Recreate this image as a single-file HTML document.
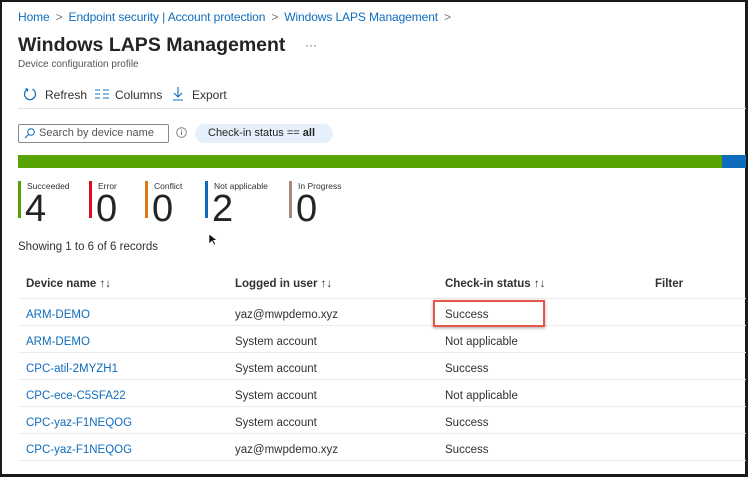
<!DOCTYPE html>
<html><head><style>
*{margin:0;padding:0;box-sizing:border-box}
body{width:750px;height:479px;background:#fff;font-family:"Liberation Sans",sans-serif;color:#323130;position:relative;overflow:hidden}
.frame{position:absolute;left:0;top:0;width:748px;height:477px;border:2px solid #1a1a1a;border-right-width:3px;border-bottom-width:3px}
.a{position:absolute;white-space:nowrap}
.bc{top:10px;left:18px;font-size:12px;color:#0f6cbd;letter-spacing:-0.1px}
.bc span{color:#777;margin:0 6px}
.title{top:34px;left:18px;font-size:19.5px;font-weight:bold;color:#242424}
.sub{top:59px;left:18px;font-size:10px;color:#555}
.tb{top:88px;font-size:12px;color:#323130}
.stat{position:absolute;top:181px;height:37px;border-left:3px solid}
.stat .l{position:absolute;left:6px;top:0;font-size:8.5px;color:#323130;white-space:nowrap}
.stat .n{position:absolute;left:4px;top:9px;font-size:38px;line-height:38px;color:#242424}
.row{position:absolute;left:18px;width:728px;height:27px;border-bottom:1px solid #ececec;font-size:11.5px}
.row div{position:absolute;top:10px;white-space:nowrap}
.c1{left:8px;color:#0f6cbd}.c2{left:217px}.c3{left:427px}.c4{left:637px}
.hd{font-weight:bold;font-size:11.5px}
</style></head><body>
<div class="frame"></div>
<div class="a bc">Home<span>&gt;</span>Endpoint security | Account protection<span>&gt;</span>Windows LAPS Management<span>&gt;</span></div>
<div class="a title">Windows LAPS Management</div>
<div class="a" style="top:38px;left:305px;font-size:12px;color:#666">···</div>
<div class="a sub">Device configuration profile</div>
<svg class="a" style="top:87px;left:23px" width="14" height="14" viewBox="0 0 14 14"><path d="M4.5 2.2A5.5 5.5 0 1 0 9.5 2.2" fill="none" stroke="#0f6cbd" stroke-width="1.2"/><path d="M2.5 1.5L4.8 2.2 4.2 4.5" fill="none" stroke="#0f6cbd" stroke-width="1.1"/></svg>
<div class="a tb" style="left:45px">Refresh</div>
<svg class="a" style="top:89px;left:95px" width="14" height="10"><path d="M0 1h5M8 1h6M0 5h5M8 5h6M0 9h5M8 9h6" stroke="#0f6cbd" stroke-width="1.1"/></svg>
<div class="a tb" style="left:115px">Columns</div>
<svg class="a" style="top:87px;left:172px" width="12" height="14"><path d="M6 0v10M2 6l4 4 4-4M1 13h10" fill="none" stroke="#0f6cbd" stroke-width="1.1"/></svg>
<div class="a tb" style="left:192px">Export</div>
<div class="a" style="top:108px;left:18px;width:728px;height:1px;background:#e1e1e1"></div>
<div class="a" style="top:124px;left:18px;width:151px;height:19px;border:1px solid #8a8a8a;border-radius:2px;font-size:11px;color:#555;padding:2px 0 0 20px;overflow:hidden">Search by device name</div>
<svg class="a" style="top:128px;left:24px" width="11" height="11"><circle cx="7" cy="4" r="3.3" fill="none" stroke="#0f6cbd" stroke-width="1"/><path d="M4.6 6.4L1 10" stroke="#0f6cbd" stroke-width="1.1"/></svg>
<svg class="a" style="top:127px;left:176px" width="11" height="11"><circle cx="5.5" cy="5.5" r="4.8" fill="none" stroke="#777" stroke-width=".9"/><path d="M5.5 4.5v3.5" stroke="#777"/><circle cx="5.5" cy="3" r=".6" fill="#777"/></svg>
<div class="a" style="top:124px;left:195px;width:138px;height:19px;border-radius:10px;background:#e5f0fa;font-size:11px;padding:3px 0 0 13px;color:#242424">Check-in status == <b>all</b></div>
<div class="a" style="top:155px;left:18px;width:704px;height:13px;background:#57a300"></div>
<div class="a" style="top:155px;left:722px;width:24px;height:13px;background:#0f6cbd"></div>
<div class="stat" style="left:18px;border-color:#57a300"><div class="l">Succeeded</div><div class="n">4</div></div>
<div class="stat" style="left:89px;border-color:#e00b1c"><div class="l">Error</div><div class="n">0</div></div>
<div class="stat" style="left:145px;border-color:#e07a10"><div class="l">Conflict</div><div class="n">0</div></div>
<div class="stat" style="left:205px;border-color:#0f6cbd"><div class="l">Not applicable</div><div class="n">2</div></div>
<div class="stat" style="left:289px;border-color:#a68a7a"><div class="l">In Progress</div><div class="n">0</div></div>
<svg class="a" style="top:233px;left:208px" width="10" height="14"><path d="M1 1v10l3-3 2 4 1.5-.7-2-4H9z" fill="#111" stroke="#fff" stroke-width=".6"/></svg>
<div class="a" style="top:241px;left:18px;font-size:11.5px">Showing 1 to 6 of 6 records</div>
<div class="row hd" style="top:272px"><div class="c1" style="color:#323130;top:6px">Device name ↑↓</div><div class="c2" style="top:6px">Logged in user ↑↓</div><div class="c3" style="top:6px">Check-in status ↑↓</div><div class="c4" style="top:6px">Filter</div></div>
<div class="row" style="top:299px"><div class="c1">ARM-DEMO</div><div class="c2">yaz@mwpdemo.xyz</div><div class="c3">Success</div></div>
<div class="row" style="top:326px"><div class="c1">ARM-DEMO</div><div class="c2">System account</div><div class="c3">Not applicable</div></div>
<div class="row" style="top:353px"><div class="c1">CPC-atil-2MYZH1</div><div class="c2">System account</div><div class="c3">Success</div></div>
<div class="row" style="top:380px"><div class="c1">CPC-ece-C5SFA22</div><div class="c2">System account</div><div class="c3">Not applicable</div></div>
<div class="row" style="top:407px"><div class="c1">CPC-yaz-F1NEQOG</div><div class="c2">System account</div><div class="c3">Success</div></div>
<div class="row" style="top:434px"><div class="c1">CPC-yaz-F1NEQOG</div><div class="c2">yaz@mwpdemo.xyz</div><div class="c3">Success</div></div>
<div class="a" style="top:300px;left:433px;width:112px;height:27px;border:2px solid #e8564a;box-shadow:0 1px 3px rgba(0,0,0,.35)"></div>
</body></html>
